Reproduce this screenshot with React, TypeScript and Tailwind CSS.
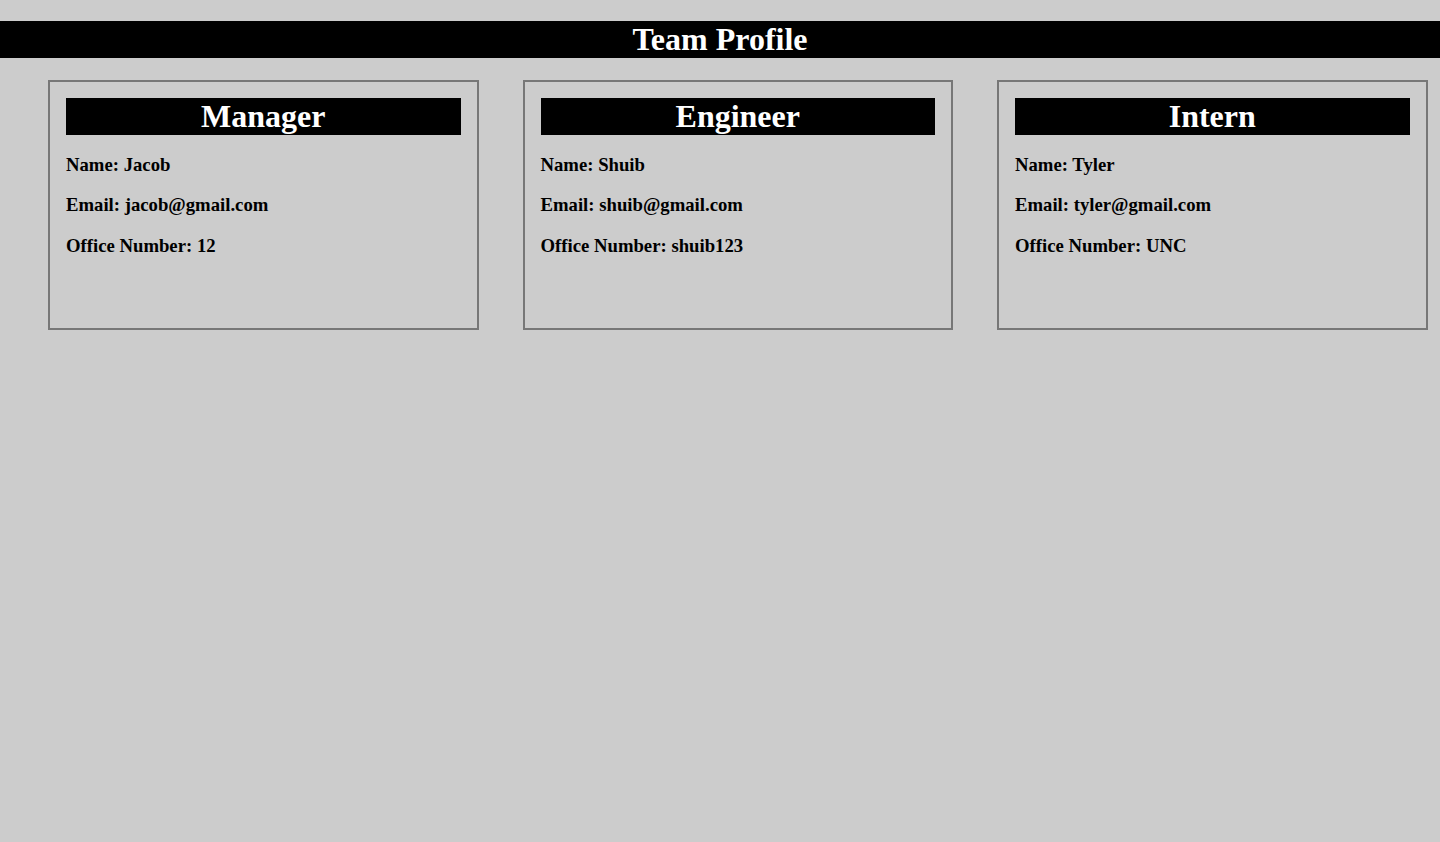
import React from "react";

type Member = { role: string; name: string; email: string; extra: string };

const members: Member[] = [
  { role: "Manager", name: "Jacob", email: "jacob@gmail.com", extra: "Office Number: 12" },
  { role: "Engineer", name: "Shuib", email: "shuib@gmail.com", extra: "Office Number: shuib123" },
  { role: "Intern", name: "Tyler", email: "tyler@gmail.com", extra: "Office Number: UNC" },
];

function Card({ m }: { m: Member }) {
  return (
    <div className="w-[430.5px] h-[250px] shrink-0 border-2 border-[#777777] p-4">
      <h2 className="h-[37px] bg-black text-white text-center text-[32px] leading-[37px] font-bold">
        {m.role}
      </h2>
      <div className="flex flex-col gap-[18.72px] pt-[18.72px]">
        <h3 className="text-[18.72px] leading-[normal] font-bold text-black">Name: {m.name}</h3>
        <h3 className="text-[18.72px] leading-[normal] font-bold text-black">Email: {m.email}</h3>
        <h3 className="text-[18.72px] leading-[normal] font-bold text-black">{m.extra}</h3>
      </div>
    </div>
  );
}

export default function App() {
  return (
    <div className="min-h-screen bg-[#cccccc] pt-[21px] font-['Liberation_Serif','Times_New_Roman',serif]">
      <h1 className="h-[37px] bg-black text-white text-center text-[32px] leading-[37px] font-bold">
        Team Profile
      </h1>
      <div className="flex gap-[44px] pl-[48px] mt-[22px]">
        {members.map((m) => (
          <Card key={m.role} m={m} />
        ))}
      </div>
    </div>
  );
}
